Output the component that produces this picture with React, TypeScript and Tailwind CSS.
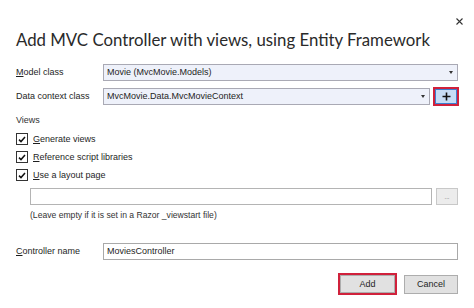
import React from "react";

function Combo({ value, className = "" }: { value: string; className?: string }) {
  return (
    <div className={`h-[17px] border border-[#a9a9b4] bg-[#eef1fa] flex items-center pl-[3px] pr-[4px] ${className}`}>
      <span className="flex-1 truncate leading-none">{value}</span>
      <svg width="4" height="3" viewBox="0 0 4 3"><path d="M0 0h4L2 3z" fill="#333" /></svg>
    </div>
  );
}

function Check({ label, u }: { label: string; u: string }) {
  const rest = label.slice(1);
  return (
    <div className="flex items-center h-[18px]">
      <div className="w-[12px] h-[12px] border border-[#333] bg-white flex items-center justify-center">
        <svg width="8" height="7" viewBox="0 0 8 7"><path d="M1 3.6l2 2L7 1" stroke="#111" strokeWidth="1.5" fill="none" /></svg>
      </div>
      <span className="ml-[5px]"><span className="underline underline-offset-1">{u}</span>{rest}</span>
    </div>
  );
}

export default function App() {
  return (
    <div
      className="w-[474px] h-[308px] bg-white flex flex-col px-4 text-[9px] leading-none text-[#1e1e1e] overflow-hidden"
      style={{ fontFamily: '"Liberation Sans", Arial, sans-serif' }}
    >
      <div className="h-[28px] flex justify-end items-end -mr-[5px]">
        <svg width="7" height="7" viewBox="0 0 7 7" className="mb-[3px]"><path d="M0.5 0.5l6 6M6.5 0.5l-6 6" stroke="#333" strokeWidth="1.1" /></svg>
      </div>
      <div
        className="text-[16.8px] leading-[24px] font-normal text-[#2a2a2a] whitespace-nowrap"
        style={{ fontFamily: 'Lato, "Liberation Sans", sans-serif' }}
      >
        Add MVC Controller with views, using Entity Framework
      </div>
      <div className="h-[12px]" />
      <div className="flex items-center h-[17px]">
        <div className="w-[87px]"><span className="underline underline-offset-1">M</span>odel class</div>
        <Combo value="Movie (MvcMovie.Models)" className="flex-1" />
      </div>
      <div className="h-[7px]" />
      <div className="flex items-center h-[17px]">
        <div className="w-[87px]">Data context class</div>
        <Combo value="MvcMovie.Data.MvcMovieContext" className="flex-1" />
        <div className="ml-[3px] -mr-[1px] w-[26px] h-[19px] border-2 border-[#d0213b] flex">
          <div className="flex-1 bg-[#c7dcf5] border border-[#3c7fd0] flex items-center justify-center">
            <svg width="9" height="9" viewBox="0 0 9 9"><path d="M4.5 0.5v8M0.5 4.5h8" stroke="#111" strokeWidth="1.6" /></svg>
          </div>
        </div>
      </div>
      <div className="h-[9px]" />
      <div className="h-[12px] flex items-center text-[#333]">Views</div>
      <div className="h-[4px]" />
      <Check label="Generate views" u="G" />
      <Check label="Reference script libraries" u="R" />
      <Check label="Use a layout page" u="U" />
      <div className="h-[4px]" />
      <div className="flex items-center ml-[14px] h-[17px]">
        <div className="flex-1 h-[17px] border border-[#b4b4b4] bg-white" />
        <div className="ml-[4px] w-[22px] h-[17px] border border-[#c8c8c8] bg-[#ececec] flex items-end justify-center pb-[4px]">
          <span className="text-[6px] leading-none text-[#555]">...</span>
        </div>
      </div>
      <div className="ml-[14px] h-[21px] flex items-center text-[8.6px] text-[#333]">(Leave empty if it is set in a Razor _viewstart file)</div>
      <div className="h-[17px]" />
      <div className="flex items-center h-[17px]">
        <div className="w-[87px]"><span className="underline underline-offset-1">C</span>ontroller name</div>
        <div className="flex-1 h-[17px] border border-[#a9a9a9] bg-white flex items-center pl-[3px]">MoviesController</div>
      </div>
      <div className="h-[13px]" />
      <div className="flex justify-end items-center">
        <div className="w-[59px] h-[22px] border-2 border-[#d0213b] flex">
          <div className="flex-1 bg-[#e1e1e1] border border-[#adadad] flex items-center justify-center">Add</div>
        </div>
        <div className="ml-[7px] w-[54px] h-[19px] border border-[#adadad] bg-[#e1e1e1] flex items-center justify-center">Cancel</div>
      </div>
    </div>
  );
}
